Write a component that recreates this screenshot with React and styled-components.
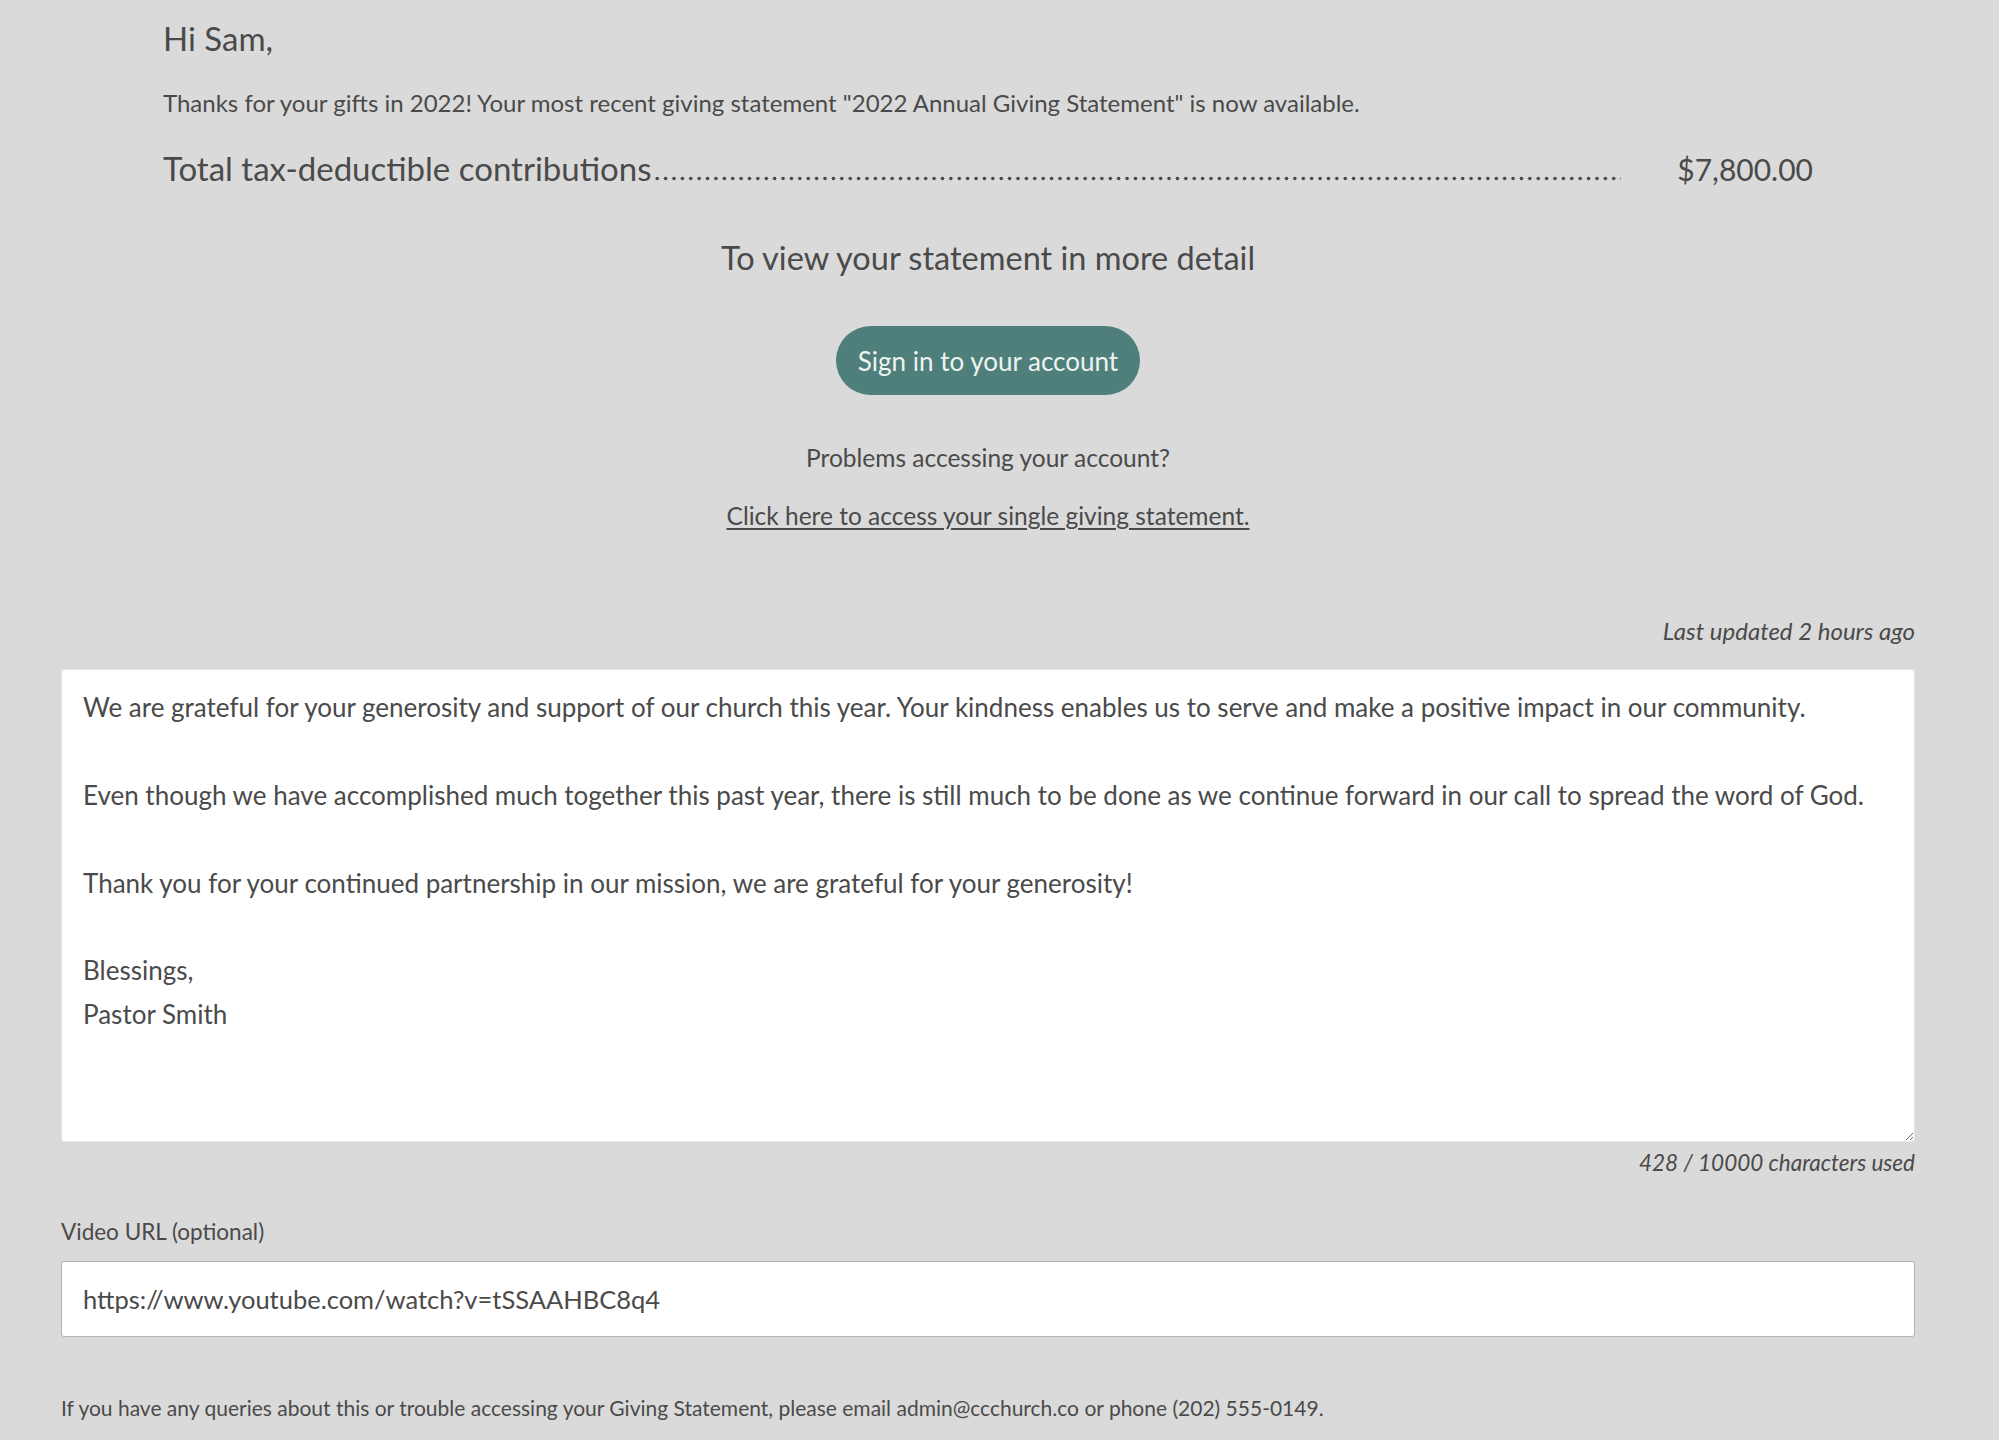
import React from 'react';
import styled, { createGlobalStyle } from 'styled-components';

const GlobalStyle = createGlobalStyle`
  html, body {
    margin: 0;
    padding: 0;
    background: #dadada;
  }
  body {
    font-family: Lato, "Open Sans", sans-serif;
    color: #4a4a4a;
  }
`;

const message = `We are grateful for your generosity and support of our church this year. Your kindness enables us to serve and make a positive impact in our community.

Even though we have accomplished much together this past year, there is still much to be done as we continue forward in our call to spread the word of God.

Thank you for your continued partnership in our mission, we are grateful for your generosity!

Blessings,
Pastor Smith`;

const Page = styled.div`
  display: flex;
  flex-direction: column;
  padding: 0 84px 0 61px;
  min-height: 1440px;
  box-sizing: border-box;
`;

const Preview = styled.section`
  display: flex;
  flex-direction: column;
  padding: 0 102px;
`;

const Greeting = styled.div`
  margin-top: 18px;
  font-size: 33px;
  line-height: 40px;
`;

const Intro = styled.p`
  margin: 30px 0 0;
  font-size: 24px;
  line-height: 30px;
`;

const TotalRow = styled.div`
  display: flex;
  align-items: baseline;
  margin-top: 30px;
  font-size: 33px;
  line-height: 40px;
`;

// dotted leader between the label and the amount
const Leader = styled.span`
  flex: 1;
  height: 5px;
  margin-left: 2px;
  background-image: radial-gradient(circle at center, #4a4a4a 1.6px, transparent 2.1px);
  background-size: 8.4px 5px;
  background-repeat: repeat-x;
  background-position: left bottom;
`;

const Amount = styled.span`
  margin-left: 56px;
  font-size: 30px;
`;

const Heading = styled.h2`
  margin: 48px 0 0;
  text-align: center;
  font-size: 32.5px;
  line-height: 42px;
  font-weight: 400;
`;

const Centered = styled.div`
  display: flex;
  justify-content: center;
  margin-top: ${p => p.gap}px;
`;

const SignInButton = styled.button`
  height: 69px;
  padding: 0 22px;
  border: none;
  border-radius: 35px;
  background: #4e7f7b;
  color: #eef3f2;
  font-family: Lato, "Open Sans", sans-serif;
  font-size: 26px;
  cursor: pointer;
`;

const Note = styled.p`
  margin: ${p => p.gap}px 0 0;
  text-align: center;
  font-size: 24.5px;
  line-height: 30px;
`;

const StatementLink = styled.a`
  color: #4a4a4a;
  text-decoration: underline;
  text-underline-offset: 3px;
`;

const Meta = styled.div`
  margin-top: ${p => p.gap}px;
  text-align: right;
  font-style: italic;
  font-size: ${p => p.size}px;
  line-height: 30px;
`;

const MessageBox = styled.textarea`
  display: block;
  margin-top: 23px;
  width: 100%;
  height: 473px;
  box-sizing: border-box;
  padding: 16px 21px;
  border: 1px solid #e4e4e4;
  border-radius: 3px;
  background: #fff;
  color: #4a4a4a;
  font-family: Lato, "Open Sans", sans-serif;
  font-size: 26px;
  line-height: 43.9px;
  resize: vertical;
  outline: none;
`;

const FieldLabel = styled.label`
  margin-top: 39px;
  font-size: 22.5px;
  line-height: 30px;
`;

const UrlInput = styled.input`
  display: block;
  margin-top: 14px;
  width: 100%;
  height: 76px;
  box-sizing: border-box;
  padding: 0 21px;
  border: 1px solid #b3b3b8;
  border-radius: 3px;
  background: #fff;
  color: #4a4a4a;
  font-family: Lato, "Open Sans", sans-serif;
  font-size: 25.5px;
  outline: none;
`;

const Footer = styled.p`
  margin: 57px 0 0;
  font-size: 21px;
  line-height: 28px;
`;

export default function App() {
  return (
    <>
      <GlobalStyle />
      <Page>
        <Preview>
          <Greeting>Hi Sam,</Greeting>
          <Intro>
            Thanks for your gifts in 2022! Your most recent giving statement "2022 Annual Giving Statement" is now available.
          </Intro>
          <TotalRow>
            <span>Total tax-deductible contributions</span>
            <Leader aria-hidden="true" />
            <Amount>$7,800.00</Amount>
          </TotalRow>
          <Heading>To view your statement in more detail</Heading>
          <Centered gap={47}>
            <SignInButton type="button">Sign in to your account</SignInButton>
          </Centered>
          <Note gap={48}>Problems accessing your account?</Note>
          <Note gap={28}>
            <StatementLink href="#">Click here to access your single giving statement.</StatementLink>
          </Note>
        </Preview>
        <Meta gap={85} size={24}>Last updated 2 hours ago</Meta>
        <MessageBox defaultValue={message} />
        <Meta gap={6} size={22.5}>428 / 10000 characters used</Meta>
        <FieldLabel htmlFor="video-url">Video URL (optional)</FieldLabel>
        <UrlInput id="video-url" defaultValue="https://www.youtube.com/watch?v=tSSAAHBC8q4" />
        <Footer>
          If you have any queries about this or trouble accessing your Giving Statement, please email admin@ccchurch.co or phone (202) 555-0149.
        </Footer>
      </Page>
    </>
  );
}
